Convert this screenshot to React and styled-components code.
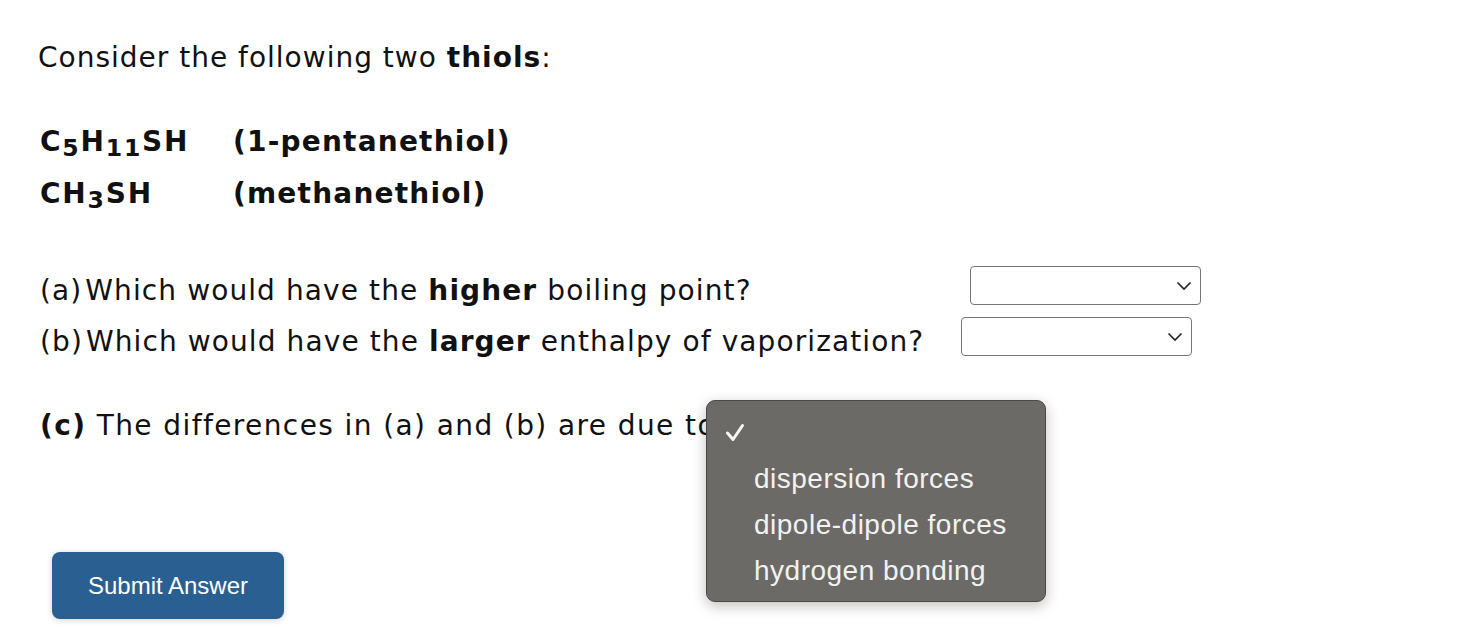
import React from "react";
import styled, { createGlobalStyle } from "styled-components";

const GlobalStyle = createGlobalStyle`
  html, body {
    margin: 0;
    padding: 0;
    background: #ffffff;
  }
  body {
    font-family: "DejaVu Sans", Verdana, sans-serif;
    color: #111;
  }
`;

const options = ["dispersion forces", "dipole-dipole forces", "hydrogen bonding"];

export default function App() {
  return (
    <Page>
      <GlobalStyle />
      <Intro>
        Consider the following two <b>thiols</b>:
      </Intro>

      <Compounds>
        <Formula>
          C<sub>5</sub>H<sub>11</sub>SH
        </Formula>
        <Name>(1-pentanethiol)</Name>
        <Formula>
          CH<sub>3</sub>SH
        </Formula>
        <Name>(methanethiol)</Name>
      </Compounds>

      <Questions>
        <QuestionRow>
          <Label>
            (a)<Spacer />Which would have the <b>higher</b> boiling point?
          </Label>
          <SelectBox $offset={218} />
        </QuestionRow>
        <QuestionRow>
          <Label>
            (b)<Spacer />Which would have the <b>larger</b> enthalpy of vaporization?
          </Label>
          <SelectBox $offset={37} />
        </QuestionRow>
      </Questions>

      <Reason>
        <ReasonLabel>
          <b>(c)</b> The differences in (a) and (b) are due to
        </ReasonLabel>
        <Menu>
          <Check>
            <svg width="20" height="19" viewBox="0 0 20 19">
              <path
                d="M2.5 10 L8 16.5 L17.5 2.5"
                fill="none"
                stroke="#f6f6f6"
                strokeWidth="3"
                strokeLinecap="round"
                strokeLinejoin="round"
              />
            </svg>
          </Check>
          <MenuList>
            {options.map((o) => (
              <MenuItem key={o}>{o}</MenuItem>
            ))}
          </MenuList>
        </Menu>
      </Reason>

      <SubmitButton>Submit Answer</SubmitButton>
    </Page>
  );
}

function SelectBox({ $offset }) {
  return (
    <Select $offset={$offset}>
      <svg width="16" height="10" viewBox="0 0 16 10">
        <path d="M1.5 1.5 L8 8 L14.5 1.5" fill="none" stroke="#222" strokeWidth="1.6" />
      </svg>
    </Select>
  );
}

const Page = styled.div`
  padding: 38px 0 0 38px;
  width: 1432px;
  height: 602px;
  overflow: hidden;
`;

const Intro = styled.p`
  margin: 0;
  font-size: 28px;
  letter-spacing: 1px;
  line-height: 40px;
`;

const Compounds = styled.div`
  display: grid;
  grid-template-columns: 193px auto;
  row-gap: 12px;
  margin-top: 44px;
  padding-left: 2px;
  font-size: 28px;
  letter-spacing: 1.2px;
  font-weight: bold;
  line-height: 40px;
`;

const Formula = styled.div`
  letter-spacing: 1.8px;
  sub {
    font-size: 0.84em;
    vertical-align: -0.2em;
    line-height: 0;
  }
`;

const Name = styled.div``;

const Questions = styled.div`
  display: flex;
  flex-direction: column;
  gap: 7px;
  margin-top: 52px;
  padding-left: 2px;
`;

const QuestionRow = styled.div`
  display: flex;
  align-items: flex-start;
`;

const Label = styled.div`
  padding-top: 5px;
  font-size: 28px;
  letter-spacing: 1.1px;
  line-height: 39px;
  white-space: nowrap;
`;

const Spacer = styled.span`
  display: inline-block;
  width: 3px;
`;

const Select = styled.div`
  margin-left: ${(p) => p.$offset}px;
  width: 231px;
  height: 39px;
  box-sizing: border-box;
  border: 1.5px solid #767676;
  border-radius: 4px;
  display: flex;
  align-items: center;
  justify-content: flex-end;
  padding-right: 8px;
  background: #fff;
`;

const Reason = styled.div`
  position: relative;
  margin-top: 45px;
  padding-left: 2px;
  height: 40px;
`;

const ReasonLabel = styled.div`
  font-size: 28px;
  letter-spacing: 1.4px;
  line-height: 40px;
  white-space: nowrap;
`;

const Menu = styled.div`
  position: absolute;
  left: 668px;
  top: -6px;
  width: 340px;
  height: 202px;
  box-sizing: border-box;
  background: #6b6a66;
  border: 1px solid #4a4946;
  border-radius: 9px;
  box-shadow: 0 4px 14px rgba(0, 0, 0, 0.25);
  font-family: "Liberation Sans", Arial, sans-serif;
  color: #f2f2f2;
`;

const Check = styled.div`
  position: absolute;
  left: 18px;
  top: 22px;
  line-height: 0;
`;

const MenuList = styled.div`
  padding: 55px 0 0 47px;
`;

const MenuItem = styled.div`
  font-size: 28px;
  letter-spacing: 0.5px;
  line-height: 46px;
`;

const SubmitButton = styled.button`
  display: block;
  margin: 106px 0 0 14px;
  width: 232px;
  height: 67px;
  border: none;
  border-radius: 8px;
  background: #2a5f91;
  color: #fff;
  font-family: "Liberation Sans", Arial, sans-serif;
  font-size: 24px;
  box-shadow: 0 1px 6px rgba(0, 0, 0, 0.18);
  cursor: pointer;
`;
